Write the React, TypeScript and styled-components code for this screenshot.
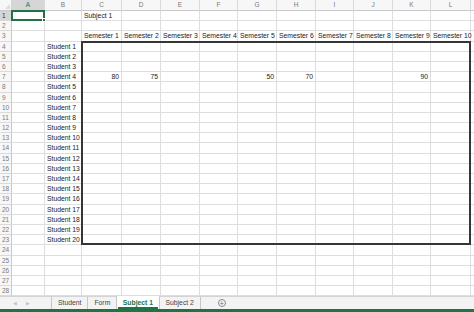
import React from 'react'
import styled, { createGlobalStyle } from 'styled-components'

const GlobalStyle = createGlobalStyle`
  html, body {
    margin: 0;
    padding: 0;
    background: #ffffff;
    overflow: hidden;
  }
  body {
    font-family: 'Liberation Sans', Arial, sans-serif;
  }
`

const GREEN = '#217346'
const COLUMNS = ['A', 'B', 'C', 'D', 'E', 'F', 'G', 'H', 'I', 'J', 'K', 'L', 'M']
const COL_WIDTHS = [33, 37, 40, 39, 39, 38, 39, 39, 38, 39, 38, 40, 30]
const ROW_COUNT = 28

type CellMap = Record<string, { text: string; align?: 'left' | 'right' }>

const cells: CellMap = { C1: { text: 'Subject 1' } }
for (let i = 0; i < 10; i++) {
  cells[`${COLUMNS[i + 2]}3`] = { text: `Semester ${i + 1}` }
}
for (let i = 0; i < 20; i++) {
  cells[`B${i + 4}`] = { text: `Student ${i + 1}` }
}
const scores: [string, number][] = [['C', 80], ['D', 75], ['G', 50], ['H', 70], ['K', 90]]
scores.forEach(([col, v]) => {
  cells[`${col}7`] = { text: String(v), align: 'right' }
})

const Window = styled.div`
  width: 474px;
  height: 312px;
  display: flex;
  flex-direction: column;
  overflow: hidden;
`

const Sheet = styled.div`
  flex: 1;
  display: grid;
  grid-template-columns: 12px ${COL_WIDTHS.map((w) => `${w}px`).join(' ')};
  grid-template-rows: 11px repeat(${ROW_COUNT}, 10.2px);
  overflow: hidden;
`

// $r / $c are 1-based grid lines so the overlays don't disturb auto placement
type Pos = { $r: number; $c: number }

const Corner = styled.div`
  grid-row: 1;
  grid-column: 1;
  position: relative;
  background: #f7f7f7;
  border-right: 1px solid #d4d4d4;
  border-bottom: 1px solid #c9c9c9;
  box-sizing: border-box;

  &::after {
    content: '';
    position: absolute;
    right: 1px;
    bottom: 1px;
    border-left: 5px solid transparent;
    border-bottom: 5px solid #dcdcdc;
  }
`

const ColHeader = styled.div<Pos & { $active?: boolean }>`
  grid-row: ${({ $r }) => $r};
  grid-column: ${({ $c }) => $c};
  box-sizing: border-box;
  overflow: hidden;
  background: ${({ $active }) => ($active ? '#d6d6d6' : '#f7f7f7')};
  border-right: 1px solid #dadada;
  border-bottom: ${({ $active }) => ($active ? `1px solid ${GREEN}` : '1px solid #c9c9c9')};
  color: ${({ $active }) => ($active ? GREEN : '#7a7a7a')};
  font-size: 6.5px;
  line-height: 10px;
  text-align: center;
`

const RowHeader = styled.div<Pos & { $active?: boolean }>`
  grid-row: ${({ $r }) => $r};
  grid-column: ${({ $c }) => $c};
  box-sizing: border-box;
  background: ${({ $active }) => ($active ? '#d6d6d6' : '#f7f7f7')};
  border-right: ${({ $active }) => ($active ? `1px solid ${GREEN}` : '1px solid #c9c9c9')};
  border-bottom: 1px solid #dadada;
  color: ${({ $active }) => ($active ? '#333' : '#7a7a7a')};
  font-size: 6.5px;
  line-height: 9.5px;
  padding-left: 2px;
`

const Cell = styled.div<Pos & { $align?: 'left' | 'right' }>`
  grid-row: ${({ $r }) => $r};
  grid-column: ${({ $c }) => $c};
  box-sizing: border-box;
  border-right: 1px solid #dedede;
  border-bottom: 1px solid #dedede;
  color: #222;
  font-size: 6.8px;
  line-height: 9.8px;
  white-space: nowrap;
  padding: 0 2px;
  text-align: ${({ $align }) => $align ?? 'left'};
  overflow: ${({ $align }) => ($align === 'right' ? 'hidden' : 'visible')};
  position: relative;
  z-index: 1;
`

const Outline = styled.div<{ $col: string; $row: string }>`
  grid-column: ${({ $col }) => $col};
  grid-row: ${({ $row }) => $row};
  border: 2px solid #363636;
  margin: -1px 0 0 -1px;
  pointer-events: none;
  z-index: 2;
`

const Selection = styled.div`
  grid-column: 2 / 3;
  grid-row: 2 / 3;
  border: 2px solid ${GREEN};
  margin: -1px 0 0 -1px;
  position: relative;
  z-index: 3;

  &::after {
    content: '';
    position: absolute;
    right: -3px;
    bottom: -3px;
    width: 4px;
    height: 4px;
    background: ${GREEN};
    border: 1px solid #fff;
    box-sizing: border-box;
  }
`

const TabBar = styled.div`
  height: 13px;
  display: flex;
  align-items: stretch;
  background: #f3f3f3;
  border-top: 1px solid #d4d4d4;
  box-sizing: border-box;
  font-size: 6.8px;
`

const Nav = styled.div`
  width: 51px;
  display: flex;
  align-items: center;
  gap: 9px;
  padding-left: 13px;
  box-sizing: border-box;
  color: #c4c4c4;
  font-size: 4.5px;
`

const Tab = styled.div<{ $active?: boolean }>`
  display: flex;
  align-items: center;
  padding: 0 ${({ $active }) => ($active ? '1px' : '6px')};
  border-left: 1px solid #c6c6c6;
  background: ${({ $active }) => ($active ? '#ffffff' : 'transparent')};
  color: ${({ $active }) => ($active ? GREEN : '#444')};
  font-weight: ${({ $active }) => ($active ? 700 : 400)};
  margin-top: ${({ $active }) => ($active ? '-1px' : '0')};
`

const TabLabel = styled.span<{ $active?: boolean }>`
  padding: 1px ${({ $active }) => ($active ? '4.5px' : '0')} 0;
  line-height: 9px;
  border-bottom: 2px solid ${({ $active }) => ($active ? GREEN : 'transparent')};
`

const TabEnd = styled.div`
  border-left: 1px solid #c6c6c6;
  display: flex;
  align-items: center;
  padding-left: 17px;
`

const AddButton = styled.div`
  width: 8px;
  height: 8px;
  border: 1px solid #8a8a8a;
  border-radius: 50%;
  box-sizing: border-box;
  display: flex;
  align-items: center;
  justify-content: center;
  color: #6a6a6a;
  font-size: 7px;
  line-height: 1;
`

const StatusBar = styled.div`
  height: 3px;
  background: ${GREEN};
`

const TABS = ['Student', 'Form', 'Subject 1', 'Subject 2']

export default function App(): JSX.Element {
  const rows = Array.from({ length: ROW_COUNT }, (_, i) => i + 1)

  return (
    <Window>
      <GlobalStyle />
      <Sheet>
        <Corner />
        {COLUMNS.map((c, ci) => (
          <ColHeader key={c} $r={1} $c={ci + 2} $active={c === 'A'}>
            {/* column M only peeks in at the right edge, its letter is off screen */}
            {c === 'M' ? '' : c}
          </ColHeader>
        ))}
        {rows.map((r) => (
          <React.Fragment key={r}>
            <RowHeader $r={r + 1} $c={1} $active={r === 1}>
              {r}
            </RowHeader>
            {COLUMNS.map((c, ci) => {
              const data = cells[`${c}${r}`]
              return (
                <Cell key={c} $r={r + 1} $c={ci + 2} $align={data?.align}>
                  {data?.text}
                </Cell>
              )
            })}
          </React.Fragment>
        ))}
        <Outline $col='4 / 14' $row='5 / 25' />
        <Selection />
      </Sheet>
      <TabBar>
        <Nav>
          <span>◀</span>
          <span>▶</span>
        </Nav>
        {TABS.map((t) => (
          <Tab key={t} $active={t === 'Subject 1'}>
            <TabLabel $active={t === 'Subject 1'}>{t}</TabLabel>
          </Tab>
        ))}
        <TabEnd>
          <AddButton>+</AddButton>
        </TabEnd>
      </TabBar>
      <StatusBar />
    </Window>
  )
}
